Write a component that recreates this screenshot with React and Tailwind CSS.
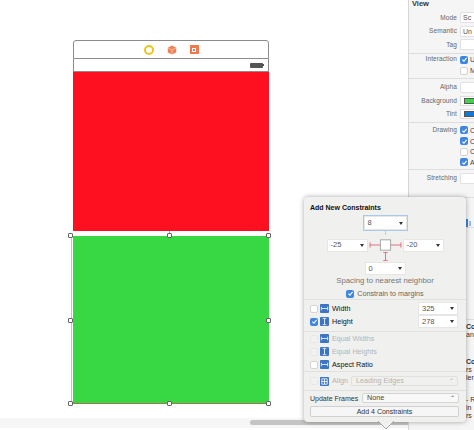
const font = { fontFamily: '"Liberation Sans", Arial, sans-serif' };

function Check({ on, dim, className = "" }) {
  if (on) {
    return (
      <span className={`flex h-[8px] w-[8px] shrink-0 items-center justify-center rounded-[2px] bg-[#3f86e0] ${className}`}>
        <svg viewBox="0 0 10 10" className="h-[7px] w-[7px]">
          <path d="M2 5.2 L4.2 7.5 L8 2.6" fill="none" stroke="#fff" strokeWidth="1.6" />
        </svg>
      </span>
    );
  }
  return (
    <span className={`h-[8px] w-[8px] shrink-0 rounded-[2px] border ${dim ? "border-[#e8e8e8] bg-[#f2f2f2]" : "border-[#d4d4d4] bg-white"} ${className}`} />
  );
}

function ComboBox({ value, className = "" }) {
  return (
    <div className={`flex h-[13px] items-center justify-between border border-[#e6e6e6] bg-white pl-[3px] pr-[3px] text-[7.5px] leading-none text-[#555] ${className}`}>
      <span>{value}</span>
      <span className="h-0 w-0 border-x-[2px] border-t-[3px] border-x-transparent border-t-[#333]" />
    </div>
  );
}

function ConstraintIcon({ kind }) {
  return (
    <span className="flex h-[9px] w-[9px] shrink-0 items-center justify-center rounded-[1px] bg-[#3d74c4]">
      <svg viewBox="0 0 10 10" className="h-[9px] w-[9px]">
        {kind === "h" ? (
          <path d="M3 1.5 H7 M3 8.5 H7 M5 2 V8" stroke="#fff" strokeWidth="0.9" fill="none" />
        ) : kind === "grid" ? (
          <path d="M2 2 H8 V8 H2 Z M5 2 V8 M2 5 H8" stroke="#fff" strokeWidth="0.9" fill="none" />
        ) : (
          <path d="M1.5 3 V7 M8.5 3 V7 M2 5 H8" stroke="#fff" strokeWidth="0.9" fill="none" />
        )}
      </svg>
    </span>
  );
}

function SizeRow({ on, label, kind, value, dim }) {
  return (
    <div className="flex h-[13px] items-center">
      <Check on={on} dim={dim} className="ml-[6px]" />
      <span className="ml-[2px]"><ConstraintIcon kind={kind} /></span>
      <span className={`ml-[3px] text-[7.2px] leading-none ${dim ? "text-[#b4b4b4]" : "text-[#111]"}`}>{label}</span>
      {value && <ComboBox value={value} className="ml-auto mr-[8px] w-[40px]" />}
    </div>
  );
}

function InspectorRow({ label, children, className = "" }) {
  return (
    <div className={`flex items-center ${className}`}>
      <span className="w-[48px] shrink-0 text-right text-[6.5px] leading-none tracking-[0.1px] text-[#666]">{label}</span>
      <div className="ml-[3px] flex min-w-0 flex-1 items-center gap-[2px] text-[7px] leading-none text-[#444]">{children}</div>
    </div>
  );
}

function Field({ text }) {
  return <div className="h-[11px] w-[14px] shrink-0 rounded-l-[2px] border-y border-l border-[#e2e2e2] bg-white pl-[2px] text-[7px] leading-[9px] text-[#555]">{text}</div>;
}

function Swatch({ color }) {
  return (
    <div className="flex h-[10px] w-[14px] shrink-0 items-center rounded-l-[1px] border-y border-l border-[#ddd] bg-white pl-[3px]">
      <span className="h-[6px] w-[11px] border-y border-l border-[#555]" style={{ backgroundColor: color }} />
    </div>
  );
}

function Handle({ className }) {
  return <span className={`absolute h-[5px] w-[5px] rounded-[1px] border border-[#666] bg-white ${className}`} />;
}

function Scene() {
  return (
    <div className="absolute left-[73px] top-[40px] w-[196px]">
      <div className="flex h-[19px] items-center justify-center gap-[13px] rounded-t-[3px] border border-[#8c8c8c] bg-white">
        <span className="h-[10px] w-[10px] rounded-full border-[2.5px] border-[#e8c61e] bg-white" />
        <svg viewBox="0 0 10 10" className="h-[10px] w-[10px]">
          <path d="M5 .5 L9.2 2.8 V7.4 L5 9.6 L.8 7.4 V2.8 Z" fill="#ee8055" />
          <path d="M.8 2.8 L5 5 L9.2 2.8 M5 5 V9.6" fill="none" stroke="#fbd6c2" strokeWidth=".7" />
        </svg>
        <span className="flex h-[9px] w-[9px] items-center justify-center bg-[#ee7a50]">
          <span className="h-[4px] w-[4px] border border-white" />
        </span>
      </div>
      <div className="flex h-[13px] items-center justify-end border-x border-b border-[#8c8c8c] bg-white pr-[4px]">
        <span className="h-[5px] w-[13px] rounded-[1px] bg-[#555]" />
        <span className="h-[2px] w-[1px] bg-[#555]" />
      </div>
      <div className="h-[159px] bg-[#ff1020]" />
      <div className="relative h-[173px] pt-[5px]">
        <div className="h-[168px] border-b border-[#9c7a4a] bg-[#38d744]" />
        <span className="absolute left-[-2px] top-[5px] h-[169px] w-[1px] bg-[#e8b8a0]" />
        <span className="absolute left-[96px] top-0 h-[5px] w-[1px] bg-[#f08a8a]" />
        <Handle className="left-[-5px] top-[2px]" />
        <Handle className="left-[94px] top-[2px]" />
        <Handle className="right-[-2px] top-[2px]" />
        <Handle className="left-[-5px] top-[87px]" />
        <Handle className="right-[-2px] top-[87px]" />
        <Handle className="bottom-[-2px] left-[-5px]" />
        <Handle className="bottom-[-2px] left-[94px]" />
        <Handle className="bottom-[-2px] right-[-2px]" />
      </div>
    </div>
  );
}

function Inspector() {
  const divider = "border-b border-[#dedede]";
  return (
    <aside className="h-full w-[66px] shrink-0 overflow-hidden border-l border-[#d6d6d6] bg-[#f5f5f5]">
      <div className="h-[8px] pl-[3px] text-[7.5px] font-bold leading-[8px] text-[#333]">View</div>
      <div className={`h-[46px] pt-[3px] ${divider}`}>
        <InspectorRow label="Mode" className="h-[13.5px]"><Field text="Sc" /></InspectorRow>
        <InspectorRow label="Semantic" className="h-[13.5px]"><Field text="Un" /></InspectorRow>
        <InspectorRow label="Tag" className="h-[13.5px]"><Field /></InspectorRow>
      </div>
      <div className={`h-[25px] ${divider}`}>
        <InspectorRow label="Interaction" className="h-[11px]"><Check on /><span>U</span></InspectorRow>
        <InspectorRow label="" className="h-[11px]"><Check /><span>M</span></InspectorRow>
      </div>
      <div className={`h-[44px] pt-[1.5px] ${divider}`}>
        <InspectorRow label="Alpha" className="h-[13.5px]"><Field /></InspectorRow>
        <InspectorRow label="Background" className="h-[13.5px]"><Swatch color="#38d744" /></InspectorRow>
        <InspectorRow label="Tint" className="h-[13.5px]"><Swatch color="#1179d8" /></InspectorRow>
      </div>
      <div className={`h-[47px] pt-[2px] ${divider}`}>
        <InspectorRow label="Drawing" className="h-[10.7px]"><Check on /><span>C</span></InspectorRow>
        <InspectorRow label="" className="h-[10.7px]"><Check on /><span>C</span></InspectorRow>
        <InspectorRow label="" className="h-[10.7px]"><Check /><span>C</span></InspectorRow>
        <InspectorRow label="" className="h-[10.7px]"><Check on /><span>A</span></InspectorRow>
      </div>
      <div className={`h-[28px] pt-[3px] ${divider}`}>
        <InspectorRow label="Stretching" className="h-[11px]"><Field /></InspectorRow>
      </div>
      <div className="flex h-[30px] justify-end border-b border-[#dedede] pt-[20px]">
        <span className="flex h-[10px] w-[8px] items-center gap-[1px] text-[7px] leading-none text-[#444]">
          <span className="h-[8px] w-[2px] shrink-0 bg-[#3f86e0]" />
          <span>I</span>
        </span>
      </div>
      <div className="h-[92px] border-b border-[#dedede]" />
      <div className="whitespace-nowrap pl-[57px] pt-[3px] text-[7px] leading-[8px] text-[#333]">
        <div className="font-bold">Co</div>
        <div>ana</div>
        <div className="mt-[19px] font-bold">Co</div>
        <div>rs -</div>
        <div>ler</div>
        <div className="mt-[14px]">- R</div>
        <div>in</div>
        <div>rs e</div>
      </div>
    </aside>
  );
}

function Popover() {
  return (
    <div className="absolute left-[304px] top-[197px] w-[162px]">
      <div className="relative h-[225px] rounded-[4px] bg-[#f0f0ee] pt-[6px] shadow-[0_0_5px_rgba(0,0,0,0.35)]">
        <div className="pl-[6px] text-[7px] font-bold leading-[9px] text-[#111]">Add New Constraints</div>

        <div className="mt-[4px] flex justify-center">
          <ComboBox value="8" className="h-[14px] w-[43px] border-[#6ea4e2] shadow-[0_0_0_1px_#a9c9ee]" />
        </div>
        <div className="mx-auto h-[5px] w-[1px] bg-[#f0b8bc]" />
        <div className="flex items-center justify-center">
          <ComboBox value="-25" className="w-[41px]" />
          <svg viewBox="0 0 68 20" className="h-[20px] w-[35px] shrink-0">
            <path d="M4 5 V15 M4 10 H24 M64 5 V15 M44 10 H64" stroke="#e0566a" strokeWidth="1.6" fill="none" />
            <rect x="24" y="0" width="20" height="20" fill="#fff" stroke="#999" strokeWidth="1.6" />
          </svg>
          <ComboBox value="-20" className="w-[41px]" />
        </div>
        <div className="-mt-[3px] flex justify-center">
          <svg viewBox="0 0 10 10" className="h-[9px] w-[9px]">
            <path d="M2.5 .5 H7.5 M5 .5 V9.5 M2.5 9.5 H7.5" stroke="#e0566a" strokeWidth=".9" fill="none" />
          </svg>
        </div>
        <div className="mt-[1px] flex justify-center">
          <ComboBox value="0" className="w-[41px]" />
        </div>
        <div className="mt-[1px] text-center text-[7.8px] leading-[10px] text-[#777]">Spacing to nearest neighbor</div>
        <div className="mt-[3px] flex h-[9px] items-center justify-center gap-[3px] text-[7.2px] leading-none text-[#666]">
          <Check on />
          <span>Constrain to margins</span>
        </div>

        <div className="mt-[1px] border-t border-[#e0e0e0] pt-[2px]">
          <SizeRow label="Width" kind="w" value="325" />
          <SizeRow label="Height" kind="h" value="278" on />
        </div>
        <div className="mt-[3px] border-t border-[#e0e0e0]">
          <SizeRow label="Equal Widths" kind="w" dim />
          <SizeRow label="Equal Heights" kind="h" dim />
          <SizeRow label="Aspect Ratio" kind="w" />
        </div>
        <div className="flex h-[19px] items-center border-t border-[#e0e0e0]">
          <Check dim className="ml-[6px]" />
          <span className="ml-[2px]"><ConstraintIcon kind="grid" /></span>
          <span className="ml-[3px] text-[7.2px] leading-none text-[#b4b4b4]">Align</span>
          <div className="ml-[3px] flex h-[10px] w-[107px] items-center justify-between rounded-[2px] border border-[#e0e0e0] pl-[4px] pr-[3px] text-[7.2px] leading-none text-[#b4b4b4]">
            <span>Leading Edges</span>
            <span className="text-[6px]">⌃</span>
          </div>
        </div>
        <div className="flex h-[15px] items-center border-t border-[#e0e0e0] pl-[6px]">
          <span className="w-[52px] shrink-0 text-[7px] leading-none text-[#333]">Update Frames</span>
          <div className="flex h-[10px] w-[97px] items-center justify-between rounded-[2px] border border-[#d4d4d4] bg-[#f8f8f8] pl-[4px] pr-[3px] text-[7.2px] leading-none text-[#444]">
            <span>None</span>
            <span className="text-[6px]">⌃</span>
          </div>
        </div>
        <div className="ml-[6px] mr-[7px] mt-[1px] flex h-[11px] items-center justify-center rounded-[2px] border border-[#d0d0d0] bg-[#f6f6f6] text-[7px] leading-none text-[#333]">
          Add 4 Constraints
        </div>
      </div>
      <svg viewBox="0 0 16 8" className="relative -mt-[1px] ml-[74px] h-[8px] w-[16px]">
        <path d="M0 0 L8 8 L16 0 Z" fill="#f0f0ee" />
        <path d="M0 0 L8 8 L16 0" fill="none" stroke="#a8a8a8" strokeWidth="1" />
      </svg>
    </div>
  );
}

export default function App() {
  return (
    <div className="relative flex h-[430px] w-[474px] overflow-hidden bg-white" style={font}>
      <main className="relative h-full flex-1 bg-white">
        <Scene />
        <div className="absolute bottom-[2px] left-0 right-0 h-[10px] bg-[#f6f6f6]">
          <span className="absolute left-[250px] right-0 top-[2px] h-[5px] rounded-l-full bg-[#c4c4c4]" />
        </div>
      </main>
      <Inspector />
      <Popover />
    </div>
  );
}
